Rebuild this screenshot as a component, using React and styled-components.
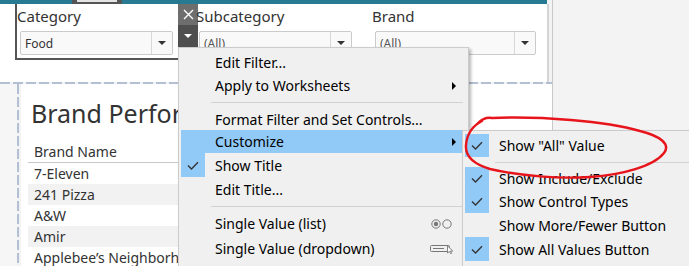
import React from 'react'
import styled, { createGlobalStyle } from 'styled-components'

const GlobalStyle = createGlobalStyle`
  html, body {
    margin: 0;
    padding: 0;
    background: #f3f3f3;
  }
  body {
    font-family: 'Noto Sans', 'Open Sans', sans-serif;
    color: #333;
  }
`

const Screen = styled.div`
  position: relative;
  width: 689px;
  height: 266px;
  overflow: hidden;
  display: flex;
  background: #f3f3f3;
`

const Dashboard = styled.div`
  width: 553px;
  height: 266px;
  display: flex;
  flex-direction: column;
  box-sizing: border-box;
  border-right: 1px solid #c9c9c9;
`

const TopStrip = styled.div`
  flex-shrink: 0;
  height: 4px;
  margin-right: 5px;
  padding-left: 72px;
  background: #287a93;
  display: flex;
`

const Tab = styled.div`
  width: 40px;
  height: 2px;
  background: #e4e4e4;
  border: 5px solid #555;
  border-top: 0;
  border-bottom-width: 2px;
`

const FilterPanel = styled.div`
  flex-shrink: 0;
  height: 78px;
  margin-right: 3px;
  padding-left: 15px;
  box-sizing: border-box;
  background: #fff;
  border-right: 2px solid #d4d4d4;
  display: flex;
  gap: 14px;
  align-items: flex-start;
`

const FilterCard = styled.div`
  position: relative;
  width: ${p => p.$w}px;
  height: 56px;
  box-sizing: border-box;
  padding-top: 2px;
  border: 2px solid ${p => (p.$selected ? '#555' : 'transparent')};
  border-top: 0;
`

const FilterLabel = styled.div`
  font-size: 15px;
  line-height: 20px;
  color: #333;
  white-space: nowrap;
`

const Dropdown = styled.div`
  margin: 5px 0 0 3px;
  width: ${p => p.$w}px;
  height: 24px;
  box-sizing: border-box;
  border: 1px solid #cbcbcb;
  border-radius: 2px;
  background: #f9f9f9;
  display: flex;
  align-items: center;
`

const DropdownValue = styled.span`
  flex: 1;
  padding-left: 4px;
  font-size: 12px;
  color: ${p => (p.$muted ? '#555' : '#333')};
`

const DropdownToggle = styled.span`
  width: 20px;
  align-self: stretch;
  border-left: 1px solid #d8d8d8;
  display: flex;
  align-items: center;
  justify-content: center;
  &::after {
    content: '';
    border-top: 4px solid #333;
    border-left: 4px solid transparent;
    border-right: 4px solid transparent;
  }
`

const Handles = styled.div`
  position: absolute;
  left: 100%;
  top: 0;
  width: 20px;
  display: flex;
  flex-direction: column;
`

const HandleButton = styled.div`
  height: ${p => p.$h}px;
  background: ${p => p.$bg};
  display: flex;
  align-items: center;
  justify-content: center;
`

const MiniArrow = styled.span`
  border-top: 4px solid #fff;
  border-left: 4px solid transparent;
  border-right: 4px solid transparent;
`

const HDash = styled.div`
  flex-shrink: 0;
  height: 2px;
  background: repeating-linear-gradient(to right, #b3bfd3 0 10px, transparent 10px 13px);
`

const SheetRow = styled.div`
  flex: 1;
  min-height: 0;
  display: flex;
`

const Gutter = styled.div`
  width: 17px;
  background: #f6f6f6;
`

const VDash = styled.div`
  width: 2px;
  background: repeating-linear-gradient(to bottom, #b3bfd3 0 10px, transparent 10px 13px);
`

const Sheet = styled.div`
  flex: 1;
  margin-left: 2px;
  padding: 14px 0 0 7px;
  background: #fff;
  overflow: hidden;
`

const SheetTitle = styled.div`
  margin-left: 3px;
  font-size: 25px;
  line-height: 30px;
  color: #333;
  white-space: nowrap;
`

const Table = styled.div`
  margin-top: 13px;
  width: 320px;
`

const HeadCell = styled.div`
  height: 21px;
  line-height: 21px;
  padding-left: 6px;
  font-size: 14px;
  border-bottom: 1px solid #c8c8c8;
  color: #333;
`

const Row = styled.div`
  height: 21px;
  line-height: 21px;
  padding-left: 6px;
  font-size: 14px;
  white-space: nowrap;
  color: #333;
  background: ${p => (p.$shaded ? '#f2f2f2' : '#fff')};
`

const Menu = styled.div`
  position: absolute;
  left: ${p => p.$x}px;
  top: ${p => p.$y}px;
  width: ${p => p.$w}px;
  height: ${p => p.$h}px;
  box-sizing: border-box;
  padding: 3px ${p => p.$pr}px 3px 2px;
  background: #f0f0f0;
  border: 1px solid #cccccc;
  box-shadow: 2px 2px 3px rgba(0, 0, 0, 0.28);
`

const Item = styled.div`
  height: ${p => p.$h}px;
  display: flex;
  align-items: center;
  background: ${p => (p.$active ? '#91c9f7' : 'transparent')};
`

const CheckCell = styled.span`
  width: 24px;
  align-self: stretch;
  display: flex;
  align-items: center;
  justify-content: center;
  background: ${p => (p.$checked ? '#91c9f7' : 'transparent')};
`

const ItemLabel = styled.span`
  flex: 1;
  margin-left: 10px;
  font-size: 14px;
  color: #000;
  white-space: nowrap;
`

const SubArrow = styled.span`
  margin-right: 7px;
  border-left: 4px solid #000;
  border-top: 4px solid transparent;
  border-bottom: 4px solid transparent;
`

const ItemIcon = styled.span`
  margin-right: ${p => p.$mr}px;
  display: flex;
`

const Separator = styled.div`
  height: ${p => p.$h}px;
  margin-left: 30px;
  display: flex;
  align-items: center;
  &::after {
    content: '';
    flex: 1;
    height: 1px;
    background: #d2d2d2;
  }
`

const Annotation = styled.svg`
  position: absolute;
  left: 0;
  top: 0;
  pointer-events: none;
`

const Check = () => (
  <svg width="12" height="9" viewBox="0 0 12 9">
    <path d="M1 4.5 L4.5 8 L11 1.2" fill="none" stroke="#333" strokeWidth="1.3" />
  </svg>
)

const RadioIcon = () => (
  <svg width="21" height="10" viewBox="0 0 21 10">
    <circle cx="5" cy="5" r="4.2" fill="none" stroke="#777" strokeWidth="1" />
    <circle cx="5" cy="5" r="2.2" fill="#777" />
    <circle cx="16" cy="5" r="4.2" fill="none" stroke="#777" strokeWidth="1" />
  </svg>
)

const DropdownIcon = () => (
  <svg width="25" height="10" viewBox="0 0 25 10">
    <rect x="0.5" y="1.5" width="19" height="6" rx="1" fill="none" stroke="#777" strokeWidth="1" />
    <path d="M3 4.5 H14" stroke="#777" strokeWidth="1" />
    <path d="M17.5 2 V9 L19.3 7.4 L20.6 9.8 L21.6 9.3 L20.4 7 L22.8 7 Z" fill="#fff" stroke="#777" strokeWidth="0.9" strokeLinejoin="round" />
  </svg>
)

const MenuItem = ({ children, h = 23, active, checked, submenu, icon, iconGap = 11 }) => (
  <Item $h={h} $active={active}>
    <CheckCell $checked={checked}>{checked && <Check />}</CheckCell>
    <ItemLabel>{children}</ItemLabel>
    {submenu && <SubArrow />}
    {icon && <ItemIcon $mr={iconGap}>{icon}</ItemIcon>}
  </Item>
)

const brands = [
  '7-Eleven',
  '241 Pizza',
  'A&W',
  'Amir',
  'Applebee\u2019s Neighborhood Grill + Bar',
]

const filters = [
  { label: 'Category', value: 'Food', w: 165, dd: 153, selected: true },
  { label: 'Subcategory', value: '(All)', w: 162, dd: 153 },
  { label: 'Brand', value: '(All)', w: 170, dd: 161 },
]

export default function App() {
  return (
    <Screen>
      <GlobalStyle />
      <Dashboard>
        <TopStrip>
          <Tab />
        </TopStrip>
        <FilterPanel>
          {filters.map(f => (
            <FilterCard key={f.label} $w={f.w} $selected={f.selected}>
              <FilterLabel>{f.label}</FilterLabel>
              <Dropdown $w={f.dd}>
                <DropdownValue $muted={f.value === '(All)'}>{f.value}</DropdownValue>
                <DropdownToggle />
              </Dropdown>
              {f.selected && (
                <Handles>
                  <HandleButton $h={21} $bg="#6e6e6e">
                    <svg width="11" height="11" viewBox="0 0 11 11">
                      <path d="M1 1 L10 10 M10 1 L1 10" stroke="#fff" strokeWidth="1.4" />
                    </svg>
                  </HandleButton>
                  <HandleButton $h={22} $bg="#4f4f4f">
                    <MiniArrow />
                  </HandleButton>
                </Handles>
              )}
            </FilterCard>
          ))}
        </FilterPanel>
        <HDash />
        <SheetRow>
          <Gutter />
          <VDash />
          <Sheet>
            <SheetTitle>Brand Performance by Region</SheetTitle>
            <Table>
              <HeadCell>Brand Name</HeadCell>
              {brands.map((b, i) => (
                <Row key={b} $shaded={i % 2 === 1}>{b}</Row>
              ))}
            </Table>
          </Sheet>
        </SheetRow>
      </Dashboard>

      <Menu $x={178} $y={47} $w={291} $h={230} $pr={5}>
        <MenuItem>Edit Filter...</MenuItem>
        <MenuItem submenu>Apply to Worksheets</MenuItem>
        <Separator $h={11} />
        <MenuItem h={22}>Format Filter and Set Controls...</MenuItem>
        <MenuItem active submenu>Customize</MenuItem>
        <MenuItem h={24} checked>Show Title</MenuItem>
        <MenuItem h={25}>Edit Title...</MenuItem>
        <Separator $h={9} />
        <MenuItem h={25} icon={<RadioIcon />}>Single Value (list)</MenuItem>
        <MenuItem h={25} icon={<DropdownIcon />} iconGap={8}>Single Value (dropdown)</MenuItem>
      </Menu>

      <Menu $x={462} $y={130} $w={250} $h={146} $pr={0}>
        <MenuItem checked>Show "All" Value</MenuItem>
        <Separator $h={10} />
        <MenuItem checked>Show Include/Exclude</MenuItem>
        <MenuItem checked>Show Control Types</MenuItem>
        <MenuItem h={24}>Show More/Fewer Button</MenuItem>
        <MenuItem h={24} checked>Show All Values Button</MenuItem>
      </Menu>

      <Annotation width="689" height="266" viewBox="0 0 689 266">
        <path
          d="M478 123 C482 119 486 117 492 118 C540 116 605 121 640 131 C660 136 671 144 664 153 C654 166 622 175 590 177 C560 179 520 176 490 169 C473 164 465 156 466 145 C467 134 472 126 482 121"
          fill="none"
          stroke="#e8141b"
          strokeWidth="2.4"
          strokeLinecap="round"
        />
      </Annotation>
    </Screen>
  )
}
